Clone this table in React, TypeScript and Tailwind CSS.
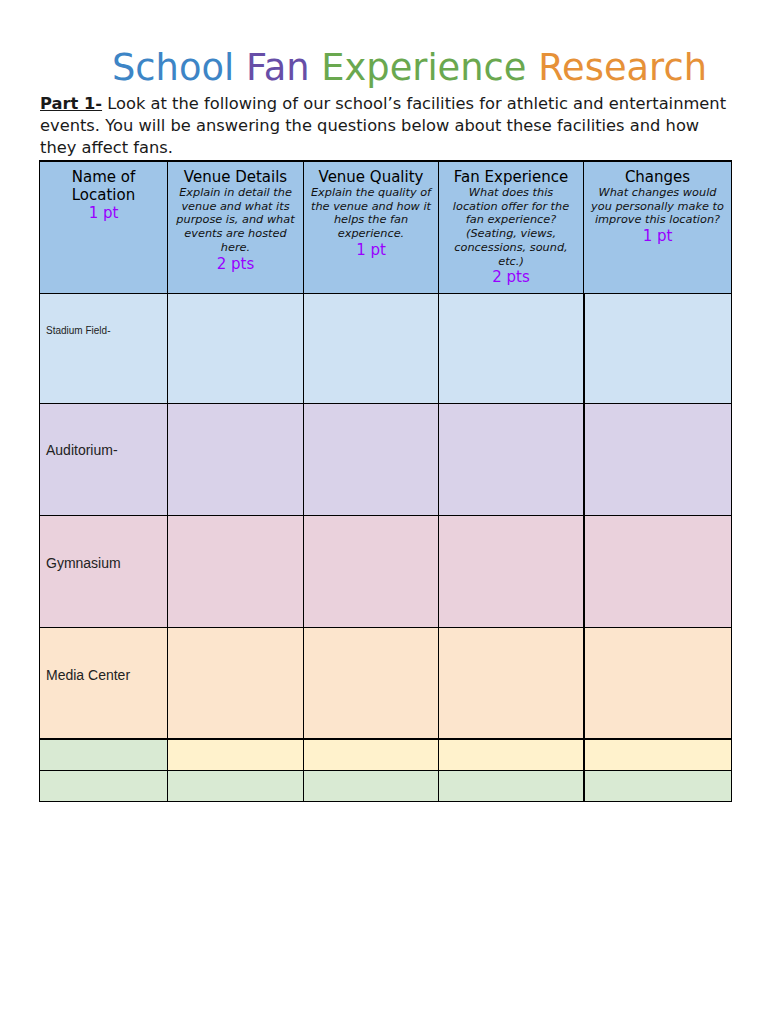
const ROWS = [
  { label: 'Stadium Field-', bg: 'bg-[#cfe2f3]', first: 'bg-[#cfe2f3]', h: 'h-[110px]', text: 'text-[10px] pt-[29px]' },
  { label: 'Auditorium-', bg: 'bg-[#d9d2e9]', first: 'bg-[#d9d2e9]', h: 'h-[112px]', text: 'text-[14px] pt-[38px]' },
  { label: 'Gymnasium', bg: 'bg-[#ead1dc]', first: 'bg-[#ead1dc]', h: 'h-[112px]', text: 'text-[14px] pt-[39px]' },
  { label: 'Media Center', bg: 'bg-[#fce5cd]', first: 'bg-[#fce5cd]', h: 'h-[112px]', text: 'text-[14px] pt-[39px]' },
  { label: '', bg: 'bg-[#fff2cc]', first: 'bg-[#d9ead3]', h: 'h-[31px]', text: '' },
  { label: '', bg: 'bg-[#d9ead3]', first: 'bg-[#d9ead3]', h: 'h-[31px]', text: '' },
];

const HEADERS = [
  { title: ['Name of', 'Location'], desc: [], pts: '1 pt' },
  {
    title: ['Venue Details'],
    desc: ['Explain in detail the', 'venue and what its', 'purpose is, and what', 'events are hosted', 'here.'],
    pts: '2 pts',
  },
  {
    title: ['Venue Quality'],
    desc: ['Explain the quality of', 'the venue and how it', 'helps the fan', 'experience.'],
    pts: '1 pt',
  },
  {
    title: ['Fan Experience'],
    desc: ['What does this', 'location offer for the', 'fan experience?', '(Seating, views,', 'concessions, sound,', 'etc.)'],
    pts: '2 pts',
  },
  {
    title: ['Changes'],
    desc: ['What changes would', 'you personally make to', 'improve this location?'],
    pts: '1 pt',
  },
];

const WIDTHS = ['w-[128px]', 'w-[136px]', 'w-[135px]', 'w-[145px]', 'w-[148px]'];

export default function App() {
  return (
    <div className="w-[768px] h-[1024px] bg-white text-black">
      <h1 className="pt-[44px] pl-[112px] text-[36.8px] leading-[48px] font-['DejaVu_Sans',sans-serif] whitespace-nowrap">
        <span className="text-[#3d85c6]">School</span>{' '}
        <span className="text-[#674ea7]">Fan</span>{' '}
        <span className="text-[#6aa84f]">Experience</span>{' '}
        <span className="text-[#e69138]">Research</span>
      </h1>

      <p className="mt-[1px] pl-[40px] text-[16.3px] leading-[22px] text-[#1a1a1a] whitespace-nowrap font-['DejaVu_Sans',sans-serif]">
        <span className="font-bold underline">Part 1-</span> Look at the following of our school’s facilities for
        athletic and entertainment
        <br />
        events. You will be answering the questions below about these facilities and how
        <br />
        they affect fans.
      </p>

      <table className="ml-[39px] mt-[1px] border-collapse table-fixed border-t-2 border-black">
        <thead>
          <tr className="bg-[#9fc5e8] h-[132px]">
            {HEADERS.map((h, i) => (
              <th
                key={i}
                className={`${WIDTHS[i]} border border-black align-top font-normal px-[2px] pt-[6px] font-['DejaVu_Sans',sans-serif]`}
              >
                <div className="text-[15px] leading-[18px] text-black">
                  {h.title.map((t) => (
                    <div key={t}>{t}</div>
                  ))}
                </div>
                {h.desc.length > 0 && (
                  <div className="italic text-[11.3px] leading-[13.7px] text-[#111]">
                    {h.desc.map((d) => (
                      <div key={d} className="whitespace-nowrap">
                        {d}
                      </div>
                    ))}
                  </div>
                )}
                <div className="text-[15px] leading-[18px] text-[#9900ff]">{h.pts}</div>
              </th>
            ))}
          </tr>
        </thead>
        <tbody>
          {ROWS.map((r, ri) => (
            <tr key={ri} className={r.h}>
              {WIDTHS.map((w, ci) => (
                <td
                  key={ci}
                  className={`${w} border border-black align-top ${ci === 0 ? r.first : r.bg} ${
                    ci === 4 ? 'border-l-2' : ''
                  } ${ri === 4 ? 'border-t-2' : ''}`}
                >
                  {ci === 0 && r.label && (
                    <div className={`pl-[6px] ${r.text} leading-[16px] text-[#222] font-['Liberation_Sans',sans-serif]`}>
                      {r.label}
                    </div>
                  )}
                </td>
              ))}
            </tr>
          ))}
        </tbody>
      </table>
    </div>
  );
}
